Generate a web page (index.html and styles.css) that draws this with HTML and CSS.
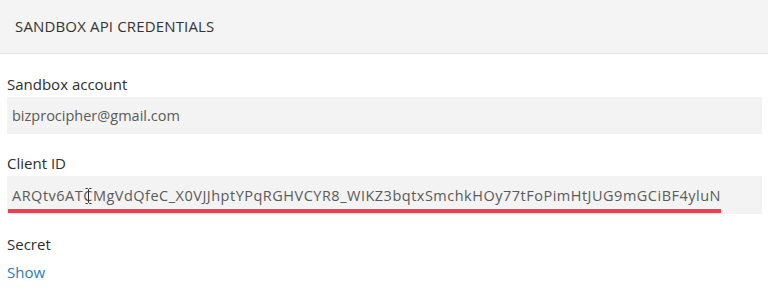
FILE: index.html
```html
<!DOCTYPE html>
<html>
<head>
<meta charset="utf-8">
<link rel="stylesheet" href="styles.css">
</head>
<body>
<div class="panel">
  <div class="panel-head">SANDBOX API CREDENTIALS</div>
  <div class="panel-body">
    <div class="field">
      <div class="label">Sandbox account</div>
      <div class="value">bizprocipher@gmail.com</div>
    </div>
    <div class="field field-id">
      <div class="label">Client ID</div>
      <div class="value"><span class="marked">ARQtv6ATCMgVdQfeC_X0VJJhptYPqRGHVCYR8_WIKZ3bqtxSmchkHOy77tFoPimHtJUG9mGCiBF4yluN</span><svg class="ibeam" width="7" height="16" viewBox="0 0 7 16"><path d="M0.5 0.5h2l1 1 1-1h2M3.5 1.5v13M0.5 15.5h2l1-1 1 1h2" fill="none" stroke="#333" stroke-width="1"/></svg></div>
    </div>
    <div class="field field-secret">
      <div class="label">Secret</div>
      <a class="link">Show</a>
    </div>
  </div>
</div>
</body>
</html>
```
FILE: styles.css
```css
html, body { margin: 0; padding: 0; background: #fff; }
body { font-family: "Open Sans", "Noto Sans", sans-serif; color: #2c2e2f; }
.panel { width: 768px; }
.panel-head {
  height: 54px;
  box-sizing: border-box;
  background: #f4f4f4;
  border-bottom: 1px solid #e6e6e6;
  padding: 16px 0 0 15px;
  font-size: 15px;
  letter-spacing: 0.15px;
  color: #333;
}
.panel-body { padding: 20px 6px 0 7px; }
.field { display: flex; flex-direction: column; }
.label { font-size: 15px; line-height: 20px; color: #2c2e2f; }
.value {
  position: relative;
  margin-top: 3px;
  height: 37px;
  background: #f3f3f3;
  box-sizing: border-box;
  padding: 9px 0 0 5px;
  font-size: 14.5px;
  line-height: 20px;
  color: #5a5a5a;
  margin-bottom: 18px;
}
.field-id { margin-top: 1px; }
.field-id .value { height: 38px; padding-top: 10px; margin-bottom: 20px; }
.marked {
  display: inline-block;
  border-bottom: 4px solid #e8424f;
  padding-bottom: 3px;
  margin-left: -4px;
  padding-left: 4px;
  letter-spacing: 0.5px;
}
.ibeam { position: absolute; left: 78px; top: 12px; }
.link { font-size: 15px; line-height: 20px; color: #2b7cb8; margin-top: 8px; }
```
